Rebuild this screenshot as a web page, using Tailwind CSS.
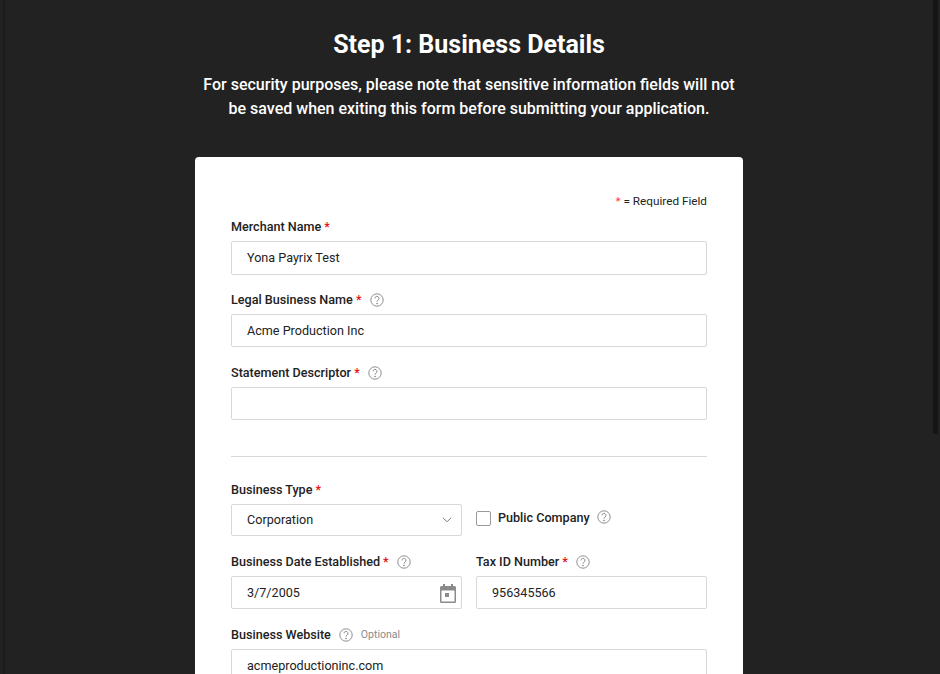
<!DOCTYPE html>
<html><head><meta charset="utf-8"><script src="https://cdn.jsdelivr.net/npm/@tailwindcss/browser@4"></script></head>
<body class="m-0 h-[674px] w-[940px] overflow-hidden bg-[#222222] font-['Roboto',sans-serif]">
<div class="relative h-[674px] w-[940px] overflow-hidden">
  <div class="absolute left-[3px] top-0 h-full w-[2px] bg-[#1c1c1c]"></div>
  <div class="absolute left-[933px] top-0 h-[434px] w-[5px] bg-[#151515]"></div>
  <main class="flex w-[938px] flex-col items-center pt-[29px]">
    <h1 class="text-[25px] leading-[31px] font-bold text-white">Step 1: Business Details</h1>
    <p class="mt-[13px] w-[548px] text-center text-[16px] leading-[24px] font-medium text-white">For security purposes, please note that sensitive information fields will not<br>be saved when exiting this form before submitting your application.</p>
    <section class="mt-[36px] w-[548px] rounded-[4px] bg-white px-[36px] pt-[36px] pb-10">
      <p class="text-right text-[11.75px] leading-[16px] text-[#222]"><span class="text-[#ff3b3b]">*</span> = Required Field</p>

      <label class="mt-[10px] block text-[12.6px] leading-[16px] font-medium text-[#222]">Merchant Name <span class="text-[#e81010]">*</span></label>
      <div class="mt-[6px] flex h-[34px] items-center rounded-[2px] border border-[#d8d8d8] px-[15px] text-[12.6px] text-[#222]">Yona Payrix Test</div>

      <div class="mt-[17px] flex h-[16px] items-center text-[12.6px] font-medium text-[#222]"><span>Legal Business Name <span class="text-[#e81010]">*</span></span>
        <svg class="ml-[9px]" width="14" height="14" viewBox="0 0 14 14" fill="none" stroke="#8f8f8f"><circle cx="7" cy="7" r="6.2"/><path d="M5 5.4a2 2 0 1 1 3 1.7c-.7.4-1 .8-1 1.6"/><circle cx="7" cy="10.5" r=".45" fill="#8f8f8f"/></svg></div>
      <div class="mt-[6px] flex h-[33px] items-center rounded-[2px] border border-[#d8d8d8] px-[15px] pt-px text-[12.6px] text-[#222]">Acme Production Inc</div>

      <div class="mt-[18px] flex h-[16px] items-center text-[12.6px] font-medium text-[#222]"><span>Statement Descriptor <span class="text-[#e81010]">*</span></span>
        <svg class="ml-[8px]" width="14" height="14" viewBox="0 0 14 14" fill="none" stroke="#8f8f8f"><circle cx="7" cy="7" r="6.2"/><path d="M5 5.4a2 2 0 1 1 3 1.7c-.7.4-1 .8-1 1.6"/><circle cx="7" cy="10.5" r=".45" fill="#8f8f8f"/></svg></div>
      <div class="mt-[6px] h-[33px] rounded-[2px] border border-[#d8d8d8]"></div>

      <hr class="mt-[36px] border-0 border-t border-[#d8d8d8]">

      <div class="mt-[25px] grid grid-cols-2 gap-x-[14px]">
        <div>
          <label class="block text-[12.6px] leading-[16px] font-medium text-[#222]">Business Type <span class="text-[#e81010]">*</span></label>
          <div class="mt-[6px] flex h-[32px] items-center justify-between rounded-[2px] border border-[#d8d8d8] pr-[9px] pl-[15px] text-[12.6px] text-[#222]">Corporation
            <svg width="10" height="6" viewBox="0 0 10 6" fill="none" stroke="#777"><path d="M1 .8 5 4.800 9 .8"/></svg></div>
        </div>
        <div class="flex items-end pb-[10px]">
          <span class="h-[15px] w-[15px] rounded-[2px] border border-[#9a9a9a]"></span>
          <span class="ml-[7px] text-[12.6px] leading-[16px] font-medium text-[#222]">Public Company</span>
          <svg class="mb-[2px] ml-[7px]" width="14" height="14" viewBox="0 0 14 14" fill="none" stroke="#8f8f8f"><circle cx="7" cy="7" r="6.2"/><path d="M5 5.4a2 2 0 1 1 3 1.7c-.7.4-1 .8-1 1.6"/><circle cx="7" cy="10.5" r=".45" fill="#8f8f8f"/></svg>
        </div>

        <div class="mt-[18px]">
          <div class="flex h-[16px] items-center text-[12.6px] font-medium text-[#222]"><span>Business Date Established <span class="text-[#e81010]">*</span></span>
            <svg class="ml-[8px]" width="14" height="14" viewBox="0 0 14 14" fill="none" stroke="#8f8f8f"><circle cx="7" cy="7" r="6.2"/><path d="M5 5.4a2 2 0 1 1 3 1.7c-.7.4-1 .8-1 1.6"/><circle cx="7" cy="10.5" r=".45" fill="#8f8f8f"/></svg></div>
          <div class="mt-[6px] flex h-[33px] items-center justify-between rounded-[2px] border border-[#d8d8d8] pt-px pr-[5px] pl-[15px] text-[12.6px] text-[#222]">3/7/2005
            <svg width="16" height="19" viewBox="0 0 16 19" fill="#8a8a8a"><path d="M3 0h2v2h6V0h2v2h1.500A1.500 1.500 0 0 1 16 3.500v14a1.500 1.500 0 0 1-1.500 1.500h-13A1.500 1.500 0 0 1 0 17.500v-14A1.500 1.500 0 0 1 1.500 2H3zM1.500 6.500v11h13v-11z" fill-rule="evenodd"/><rect x="5" y="9" width="4" height="4"/></svg></div>
        </div>
        <div class="mt-[18px]">
          <div class="flex h-[16px] items-center text-[12.6px] font-medium text-[#222]"><span>Tax ID Number <span class="text-[#e81010]">*</span></span>
            <svg class="ml-[8px]" width="14" height="14" viewBox="0 0 14 14" fill="none" stroke="#8f8f8f"><circle cx="7" cy="7" r="6.2"/><path d="M5 5.4a2 2 0 1 1 3 1.7c-.7.4-1 .8-1 1.6"/><circle cx="7" cy="10.5" r=".45" fill="#8f8f8f"/></svg></div>
          <div class="mt-[6px] flex h-[33px] items-center rounded-[2px] border border-[#d8d8d8] px-[15px] pt-px text-[12.6px] text-[#222]">956345566</div>
        </div>
      </div>

      <div class="mt-[18px] flex h-[16px] items-center text-[12.6px] font-medium text-[#222]"><span>Business Website</span>
        <svg class="ml-[8px]" width="14" height="14" viewBox="0 0 14 14" fill="none" stroke="#8f8f8f"><circle cx="7" cy="7" r="6.2"/><path d="M5 5.4a2 2 0 1 1 3 1.7c-.7.4-1 .8-1 1.6"/><circle cx="7" cy="10.5" r=".45" fill="#8f8f8f"/></svg>
        <span class="ml-[8px] text-[10.5px] font-normal text-[#8a8a8a]">Optional</span></div>
      <div class="mt-[6px] flex h-[33px] items-center rounded-[2px] border border-[#d8d8d8] px-[15px] pt-px text-[12.6px] text-[#222]">acmeproductioninc.com</div>
    </section>
  </main>
</div>
</body></html>
